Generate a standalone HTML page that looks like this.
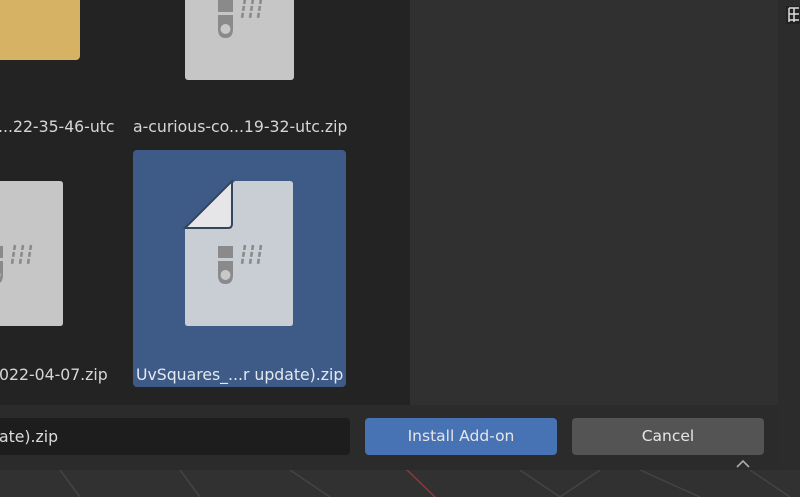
<!DOCTYPE html>
<html><head><meta charset="utf-8"><style>
html,body{margin:0;padding:0;}
body{width:800px;height:497px;overflow:hidden;background:#303030;position:relative;font-family:"DejaVu Sans","Liberation Sans",sans-serif;}
.a{position:absolute;}
.lbl{position:absolute;color:#d6d6d6;font-size:15.7px;white-space:nowrap;}
.btn{position:absolute;top:418px;height:37px;border-radius:4px;color:#e6e6e6;font-size:15.5px;text-align:center;line-height:37px;}
</style></head><body>
<svg class="a" style="left:0;top:0" width="800" height="497">
<rect width="800" height="497" fill="#313131"/>
<g stroke="#444" stroke-width="1.5">
<line x1="780" y1="40" x2="800" y2="30"/><line x1="780" y1="120" x2="800" y2="110"/><line x1="780" y1="300" x2="800" y2="330"/><line x1="780" y1="420" x2="800" y2="410"/>
<line x1="60" y1="470" x2="80" y2="497"/><line x1="180" y1="470" x2="200" y2="497"/><line x1="290" y1="470" x2="330" y2="497"/><line x1="520" y1="470" x2="560" y2="497"/><line x1="640" y1="470" x2="700" y2="497"/><line x1="750" y1="470" x2="790" y2="497"/><line x1="560" y1="497" x2="600" y2="470"/>
</g>
<line x1="405" y1="468" x2="435" y2="497" stroke="#8a3a3a" stroke-width="1.5"/>
<rect x="778" y="0" width="22" height="470" fill="#2c2c2c"/>
<rect x="0" y="0" width="778" height="470" fill="#2b2b2b"/>
<rect x="0" y="0" width="410" height="405" fill="#232323"/>
<rect x="410" y="0" width="368" height="405" fill="#303030"/>
<rect x="-10" y="-10" width="90" height="70" rx="4" fill="#d6b264"/>
<rect x="185" y="-20" width="109" height="100" rx="3" fill="#c6c6c6"/>
<rect x="133" y="150" width="213" height="237" rx="4" fill="#3e5b88"/>
<path d="M3,181 H60 Q63,181 63,184 V323 Q63,326 60,326 H-20 V181 Z" fill="#c6c6c6"/>
<path d="M235,181 H290 Q293,181 293,184 V323 Q293,326 290,326 H188 Q185,326 185,323 V228 Z" fill="#c9cdd4"/>
<path d="M232,181 L185,228 L228,228 Q232,228 232,224 Z" fill="#e6e6e8" stroke="#33465f" stroke-width="2"/>
<defs>
<g id="z">
<rect x="33" y="-80" width="15" height="12" fill="#8a8a8a"/>
<path d="M33,-65 H48 V-51 Q48,-42 40.5,-42 Q33,-42 33,-51 Z" fill="#8a8a8a"/>
<circle cx="40.5" cy="-51" r="5" fill="#c8c8c8"/>
<g stroke="#8a8a8a" stroke-width="2.6" stroke-dasharray="5,2">
<line x1="60" y1="-81" x2="57" y2="-62"/><line x1="68" y1="-81" x2="65" y2="-62"/><line x1="76" y1="-81" x2="73" y2="-62"/>
</g></g></defs>
<use href="#z" x="185" y="326"/>
<use href="#z" x="185" y="80"/>
<use href="#z" x="-45" y="326"/>
<rect x="-5" y="418" width="355" height="37" rx="4" fill="#1d1d1d"/>
<rect x="786" y="6" width="14" height="18" fill="#222"/>
<path d="M789,8 H799 M789,14 H799 M789,20 H799 M789,8 V22 M794,8 V22" stroke="#ddd" stroke-width="1.5" fill="none"/>
<path d="M737,467 L743,461 L749,467" stroke="#aaa" stroke-width="1.6" fill="none"/>
</svg>
<div class="lbl" style="left:-2px;top:117px">...22-35-46-utc</div>
<div class="lbl" style="left:133px;top:117px">a-curious-co...19-32-utc.zip</div>
<div class="lbl" style="left:-1px;top:365px">022-04-07.zip</div>
<div class="lbl" style="left:136px;top:365px;color:#e4e8ef">UvSquares_...r update).zip</div>
<div class="lbl" style="left:-1px;top:427px;color:#dcdcdc">ate).zip</div>
<div class="btn" style="left:365px;width:192px;background:#4772b3;">Install Add-on</div>
<div class="btn" style="left:572px;width:192px;background:#545454;">Cancel</div>
</body></html>
